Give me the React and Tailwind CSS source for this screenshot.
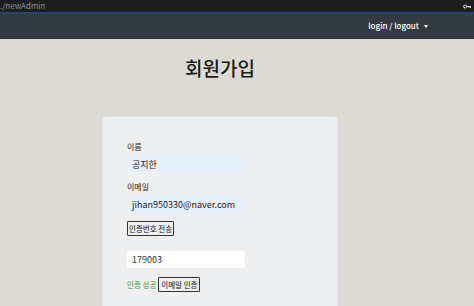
import React from "react";

const App = () => {
  return (
    <div className="w-[474px] h-[306px] overflow-hidden bg-[#dddad4] font-['Noto_Sans_CJK_KR','Noto_Sans',sans-serif]">
      {/* browser strip */}
      <div className="h-[12px] bg-[#1d1d1f] flex items-center justify-between pr-[3px]">
        <span className="text-[8px] leading-none text-[#8d9198]">./newAdmin</span>
        <svg width="8" height="5" viewBox="0 0 8 5" fill="none">
          <circle cx="2" cy="2.5" r="1.5" stroke="#d8d8d8" strokeWidth="1" />
          <path d="M3.5 2.5H7.5M6 2.5V4M7.5 2.5V4" stroke="#d8d8d8" strokeWidth="1" />
        </svg>
      </div>
      <div className="h-[2px] bg-[#27446a]" />

      {/* navbar */}
      <div className="h-[25px] bg-[#353a41] flex items-center justify-end pr-[46px] border-b border-[#2a2e34]">
        <span className="text-[8px] text-white font-medium">login / logout</span>
        <span className="ml-[5px] w-0 h-0 border-l-[2.5px] border-r-[2.5px] border-t-[3px] border-l-transparent border-r-transparent border-t-white" />
      </div>

      <div className="ml-[102px] w-[236px]">
        <h1 className="h-[77px] pt-[14px] text-center text-[19px] font-medium text-[#1a1a1a] leading-[30px]">
          회원가입
        </h1>

        <div className="bg-[#eeeff0] rounded-[3px] px-[24px] pt-[24px] h-[200px] border border-[#e6e6e6]">
          <div className="text-[8px] text-[#222] leading-[12px]">이름</div>
          <div className="mt-[3px] w-[118px] h-[17px] bg-[#e8f0fe] rounded-[2px] flex items-center px-[5px] text-[9px] text-[#222]">
            공지한
          </div>

          <div className="mt-[8px] text-[8px] text-[#222] leading-[12px]">이메일</div>
          <div className="mt-[3px] w-[118px] h-[17px] bg-[#e8f0fe] rounded-[2px] flex items-center px-[5px] text-[9px] text-[#222]">
            jihan950330@naver.com
          </div>

          <button className="mt-[8px] h-[15px] px-[1px] border border-[#333] bg-[#efefef] text-[7.5px] leading-none text-[#111] rounded-[1px]">
            인증번호 전송
          </button>

          <div className="mt-[14px] w-[118px] h-[17px] bg-white rounded-[2px] flex items-center px-[5px] text-[9px] text-[#333]">
            179003
          </div>

          <div className="mt-[9px] flex items-center gap-[2px]">
            <span className="text-[7.5px] text-[#3f9a32]">인증 성공</span>
            <button className="h-[15px] px-[2px] border border-[#333] bg-[#efefef] text-[7.5px] leading-none text-[#111] rounded-[1px]">
              이메일 인증
            </button>
          </div>
        </div>
      </div>
    </div>
  );
};

export default App;
